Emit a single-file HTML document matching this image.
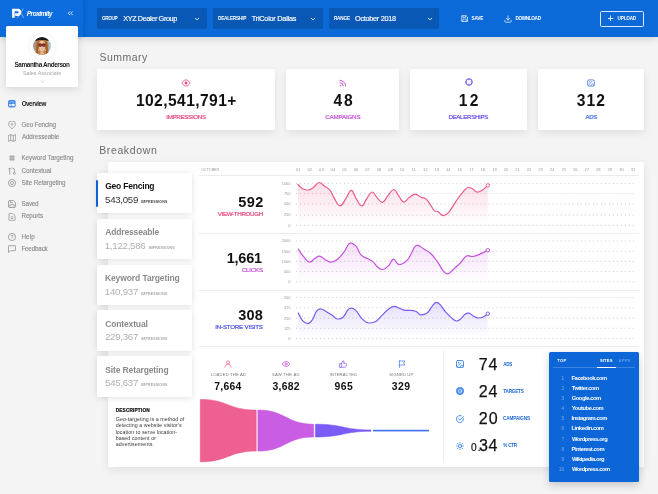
<!DOCTYPE html><html><head><meta charset="utf-8"><title>Proximity</title><style>
*{box-sizing:border-box;margin:0;padding:0}
html,body{width:658px;height:494px;overflow:hidden;background:#f4f4f4;font-family:"Liberation Sans",sans-serif;color:#111}
.abs{position:absolute}
.t{position:absolute;white-space:nowrap;line-height:1}
.b{font-weight:bold}
.i{font-style:italic}
.hdr{left:0;top:0;width:658px;height:36.5px;background:#0c69d8;box-shadow:0 2px 8px rgba(0,0,0,.14)}
.hdrl{left:0;top:0;width:83px;height:36.5px;background:#0d6ddf;box-shadow:1px 0 4px rgba(0,0,0,.13)}
.dd{top:8.3px;height:20.4px;background:#0a58b6;border-radius:1.5px}
.card{background:#fff;border-radius:1.5px;box-shadow:0 3px 9px rgba(0,0,0,.085)}
.tab{left:96.6px;width:95.6px;height:40.4px;background:#fff;border-radius:1.5px;box-shadow:0 1px 6px rgba(0,0,0,.13)}
.sep{left:199px;width:440px;height:1px;background:#ececec}
</style></head><body>
<div class="abs" style="left:0;top:0;width:658px;height:494px;will-change:transform">
<div class="abs hdr"></div><div class="abs hdrl"></div>
<svg class="abs" style="left:11px;top:7px" width="14" height="13" viewBox="11 7 14 13"><path d="M13.400 17.800V10h4.200a2.300 2.300 0 0 1 0 4.600h-2.400" stroke="#fff" stroke-width="2.600" fill="none" stroke-linejoin="miter"/><path d="M18.600 8.600l5 9.200M23.400 8.600l-6 9.200" stroke="#fff" stroke-width="0.6" fill="none" opacity=".8"/></svg>
<div class="t b i" style="left:26.78px;top:11.00px;font-size:6.60px;letter-spacing:-0.542px;color:#fff;">Proximity</div>
<svg class="abs" style="left:67px;top:10px" width="7" height="7" viewBox="0 0 7 7"><path d="M3.100 1.500L1.300 3.300l1.800 1.800M5.700 1.500L3.900 3.300l1.800 1.800" stroke="#dbe8fb" stroke-width="1" fill="none"/></svg>
<div class="abs dd" style="left:97.2px;width:110.3px"></div>
<div class="t b" style="left:102.01px;top:17.00px;font-size:4.70px;letter-spacing:-0.370px;color:#fff;">GROUP</div>
<div class="t" style="left:123.24px;top:15.00px;font-size:7.30px;letter-spacing:-0.398px;color:#fff;-webkit-text-stroke:.15px #fff">XYZ Dealer Group</div>
<svg class="abs" style="left:194.4px;top:16.500px" width="6" height="4" viewBox="0 0 6 4"><path d="M.9 .9l2.100 2L5.100 .9" stroke="#fff" stroke-width="0.8" fill="none"/></svg>
<div class="abs dd" style="left:213.1px;width:110.4px"></div>
<div class="t b" style="left:217.99px;top:17.00px;font-size:4.70px;letter-spacing:-0.202px;color:#fff;">DEALERSHIP</div>
<div class="t" style="left:251.84px;top:15.00px;font-size:7.30px;letter-spacing:-0.248px;color:#fff;-webkit-text-stroke:.15px #fff">TriColor Dallas</div>
<svg class="abs" style="left:310.3px;top:16.500px" width="6" height="4" viewBox="0 0 6 4"><path d="M.9 .9l2.100 2L5.100 .9" stroke="#fff" stroke-width="0.8" fill="none"/></svg>
<div class="abs dd" style="left:329.4px;width:110px"></div>
<div class="t b" style="left:333.89px;top:17.00px;font-size:4.70px;letter-spacing:-0.169px;color:#fff;">RANGE</div>
<div class="t" style="left:355.05px;top:15.00px;font-size:7.30px;letter-spacing:-0.288px;color:#fff;-webkit-text-stroke:.15px #fff">October 2018</div>
<svg class="abs" style="left:426.5px;top:16.500px" width="6" height="4" viewBox="0 0 6 4"><path d="M.9 .9l2.100 2L5.100 .9" stroke="#fff" stroke-width="0.8" fill="none"/></svg>
<svg class="abs" style="left:460.700px;top:14.800px" width="7.200" height="7.200" viewBox="0 0 7 7"><path d="M.7 .7h4.300l1.300 1.300v4.300H.7z" stroke="#fff" stroke-width="0.7" fill="none" stroke-linejoin="round"/><path d="M2 .7v1.700h2.400V.7M1.900 6.300V4h3.200v2.300" stroke="#fff" stroke-width="0.6" fill="none"/></svg>
<div class="t b" style="left:471.46px;top:17.00px;font-size:4.70px;letter-spacing:-0.144px;color:#fff;">SAVE</div>
<svg class="abs" style="left:504.300px;top:14.600px" width="8" height="8" viewBox="0 0 8 8"><path d="M4 .8v4.200M2.200 3.300L4 5.100l1.800-1.800M.9 5.400v1.100c0 .4.300.7.700.7h4.800c.4 0 .7-.3.700-.7V5.400" stroke="#fff" stroke-width="0.7" fill="none" stroke-linecap="round" stroke-linejoin="round"/></svg>
<div class="t b" style="left:515.39px;top:17.00px;font-size:4.70px;letter-spacing:-0.355px;color:#fff;">DOWNLOAD</div>
<div class="abs" style="left:600.400px;top:10.500px;width:44px;height:16px;border:0.8px solid rgba(255,255,255,.85);border-radius:1.500px"></div>
<div class="t" style="left:607.59px;top:13.00px;font-size:10.50px;letter-spacing:0.000px;color:#fff;">+</div>
<div class="t b" style="left:617.62px;top:17.00px;font-size:4.70px;letter-spacing:-0.233px;color:#fff;">UPLOAD</div>
<div class="abs card" style="left:5.700px;top:25.800px;width:72.300px;height:60.800px;box-shadow:0 2px 8px rgba(0,0,0,.13)"></div>
<div class="abs" style="left:29.500px;top:33.700px;width:25px;height:25px;border-radius:50%;background:#fff;box-shadow:0 0 5px rgba(0,0,0,.07)"></div>
<svg class="abs" style="left:33px;top:37.200px" width="18" height="18" viewBox="33 37.200 18 18"><defs><clipPath id="av"><circle cx="42" cy="46.200" r="9"/></clipPath></defs><g clip-path="url(#av)"><rect x="33" y="37" width="9" height="19" fill="#a59a92"/><rect x="42" y="37" width="9" height="19" fill="#a9c3cf"/><path d="M35.500 56V45c0-3.500 2.500-5.800 6.500-5.800s6.500 2.300 6.500 5.800v11z" fill="#c4824a"/><path d="M36 56l.6-11c.2-2 1-3.300 2.200-4l-.8 15zM48 56l-.6-11c-.2-2-1-3.300-2.200-4l.8 15z" fill="#9c5c2e"/><path d="M39.300 43.200c.5-1.500 1.500-2.200 2.700-2.200s2.200.7 2.700 2.200l.2 4.300c0 2.200-1.300 4.200-2.900 4.200s-2.900-2-2.900-4.200z" fill="#edc4a5"/><path d="M40.500 51.500h3l.8 4.500h-4.600z" fill="#e3b08c"/><path d="M35.300 41.300c.6-2.600 3.300-4 6.700-4s6.100 1.400 6.700 4c-2-.7-4.300-1-6.700-1s-4.700.3-6.700 1z" fill="#17171a"/><circle cx="40.300" cy="45.300" r="1.500" fill="#c9302c" stroke="#2a1414" stroke-width=".6"/><circle cx="43.700" cy="45.300" r="1.500" fill="#c9302c" stroke="#2a1414" stroke-width=".6"/><path d="M41.800 45h.4" stroke="#2a1414" stroke-width=".4"/><path d="M41.300 48.800h1.400" stroke="#c4615a" stroke-width=".5"/><circle cx="38.700" cy="50.300" r=".6" fill="#f4efe8"/><circle cx="45.400" cy="50.300" r=".6" fill="#f4efe8"/></g></svg>
<div class="t b" style="left:14.42px;top:62.00px;font-size:6.40px;letter-spacing:-0.395px;color:#1a1a1a;">Samantha Anderson</div>
<div class="t" style="left:22.95px;top:71.00px;font-size:5.40px;letter-spacing:0.019px;color:#a6a6a6;">Sales Associate</div>
<svg class="abs" style="left:39.500px;top:80px" width="5" height="3" viewBox="0 0 5 3"><path d="M.6 .6l1.900 1.700L4.400 .6" stroke="#bbb" stroke-width="0.6" fill="none"/></svg>
<svg class="abs" style="left:8.300px;top:100px" width="7.700" height="7.700" viewBox="0 0 8 8"><rect x=".1" y=".1" width="7.800" height="7.800" rx="1.800" fill="#3a82e6"/><rect x="1.200" y="1.200" width="5.600" height="1.500" rx=".4" fill="#8db8f2"/><rect x="1.200" y="3.900" width="1.700" height="2.700" rx=".4" fill="#e8f1fd"/><rect x="3.800" y="3.900" width="3" height="2.700" rx=".5" fill="#fff"/></svg>
<div class="t b" style="left:21.64px;top:101.00px;font-size:6.30px;letter-spacing:-0.453px;color:#1a1a1a;">Overview</div>
<svg class="abs" style="left:8.20px;top:120.80px" width="8" height="8" viewBox="0 0 8 8" fill="none" stroke="#8c8c8c" stroke-width="0.75" stroke-linejoin="round"><path d="M4 7.800C2 5.900.5 4.700.5 3.400a3.500 3.500 0 0 1 7 0C7.500 4.700 6 5.900 4 7.800z"/><circle cx="4" cy="3.400" r=".8"/></svg>
<div class="t" style="left:21.58px;top:122.00px;font-size:6.30px;letter-spacing:-0.165px;color:#8a8a8a;-webkit-text-stroke:.12px #8a8a8a">Geo Fencing</div>
<svg class="abs" style="left:8.20px;top:133.50px" width="8" height="8" viewBox="0 0 8 8" fill="none" stroke="#8c8c8c" stroke-width="0.75" stroke-linejoin="round"><path d="M.3 1.500l2.400-.8 2.600.8 2.400-.8v5.800l-2.400.8-2.600-.8-2.400.8zM2.700 .7v5.800M5.300 1.500v5.800"/></svg>
<div class="t" style="left:21.89px;top:134.00px;font-size:6.30px;letter-spacing:-0.103px;color:#8a8a8a;-webkit-text-stroke:.12px #8a8a8a">Addresseable</div>
<svg class="abs" style="left:8.00px;top:154.30px" width="8" height="8" viewBox="0 0 8 8" fill="none" stroke="#8c8c8c" stroke-width="0.75" stroke-linejoin="round"><path d="M1.100 2.900h5.800M1.100 5.100h5.800M3 1v6M5.100 1v6"/></svg>
<div class="t" style="left:21.38px;top:155.00px;font-size:6.30px;letter-spacing:0.004px;color:#8a8a8a;-webkit-text-stroke:.12px #8a8a8a">Keyword Targeting</div>
<svg class="abs" style="left:8.20px;top:166.50px" width="8" height="8" viewBox="0 0 8 8" fill="none" stroke="#8c8c8c" stroke-width="0.75" stroke-linejoin="round"><path d="M1.700 1v6.500M.5 2.300L1.700 .9l1.200 1.400M3.800 1.100c1.800 0 2.600.7 2.600 2.100v1.900"/><circle cx="6.400" cy="6.300" r="1"/></svg>
<div class="t" style="left:21.58px;top:168.00px;font-size:6.30px;letter-spacing:-0.042px;color:#8a8a8a;-webkit-text-stroke:.12px #8a8a8a">Contextual</div>
<svg class="abs" style="left:8.40px;top:178.80px" width="8" height="8" viewBox="0 0 8 8" fill="none" stroke="#8c8c8c" stroke-width="0.75" stroke-linejoin="round"><circle cx="4" cy="4" r="3.600"/><circle cx="4" cy="4" r="1.600"/></svg>
<div class="t" style="left:21.61px;top:180.00px;font-size:6.30px;letter-spacing:-0.086px;color:#8a8a8a;-webkit-text-stroke:.12px #8a8a8a">Site Retargeting</div>
<svg class="abs" style="left:8.20px;top:199.50px" width="8" height="8" viewBox="0 0 8 8" fill="none" stroke="#8c8c8c" stroke-width="0.75" stroke-linejoin="round"><path d="M.5 1.500c0-.6.400-1 1-1h3.900L7.500 2.600v3.900c0 .6-.4 1-1 1h-5c-.6 0-1-.4-1-1zM2.200 .5v2h2.600M1.900 7.500V4.700h4.200v2.800"/></svg>
<div class="t" style="left:21.61px;top:201.00px;font-size:6.30px;letter-spacing:-0.218px;color:#8a8a8a;-webkit-text-stroke:.12px #8a8a8a">Saved</div>
<svg class="abs" style="left:8.15px;top:212.50px" width="8" height="8" viewBox="0 0 8 8" fill="none" stroke="#8c8c8c" stroke-width="0.75" stroke-linejoin="round"><path d="M1 1c0-.4.300-.7.700-.7h2.900L7 2.700V7c0 .4-.3.700-.7.700H1.700C1.300 7.700 1 7.400 1 7zM2.800 3.900h2.400M2.800 5.500h2.400"/></svg>
<div class="t" style="left:21.38px;top:213.00px;font-size:6.30px;letter-spacing:-0.036px;color:#8a8a8a;-webkit-text-stroke:.12px #8a8a8a">Reports</div>
<svg class="abs" style="left:8.10px;top:232.90px" width="8" height="8" viewBox="0 0 8 8" fill="none" stroke="#8c8c8c" stroke-width="0.75" stroke-linejoin="round"><circle cx="4" cy="4" r="3.600"/><path d="M3 3.100c0-.7.500-1 1-1s1 .4 1 .9c0 .8-1 .8-1 1.700M4 5.700v.4"/></svg>
<div class="t" style="left:21.38px;top:234.00px;font-size:6.30px;letter-spacing:0.108px;color:#8a8a8a;-webkit-text-stroke:.12px #8a8a8a">Help</div>
<svg class="abs" style="left:8.20px;top:245.20px" width="8" height="8" viewBox="0 0 8 8" fill="none" stroke="#8c8c8c" stroke-width="0.75" stroke-linejoin="round"><path d="M.5 1.200c0-.3.200-.5.500-.5h6c.3 0 .5.200.5.500v4c0 .3-.2.500-.5.500H2.700L.5 7.500z"/></svg>
<div class="t" style="left:21.38px;top:246.00px;font-size:6.30px;letter-spacing:-0.180px;color:#8a8a8a;-webkit-text-stroke:.12px #8a8a8a">Feedback</div>
<div class="t" style="left:99.52px;top:52.00px;font-size:10.50px;letter-spacing:0.479px;color:#6a6a6a;">Summary</div>
<div class="abs card" style="left:97px;top:69px;width:178.3px;height:61px"></div>
<svg class="abs" style="left:181.00px;top:77.85px;color:#e8467f" width="10" height="10" viewBox="-5 -5 10 10" fill="none" stroke="#e8467f" stroke-width="0.7"><path d="M-4.100 0C-2.800-2.200-1.500-3.100 0-3.100S2.800-2.200 4.100 0C2.800 2.200 1.500 3.100 0 3.100S-2.800 2.200-4.100 0z" stroke-width=".8"/><circle cx="0" cy="0" r="1.200" fill="currentColor" stroke-width=".5"/></svg>
<div class="t b" style="left:135.92px;top:93.00px;font-size:15.60px;letter-spacing:0.423px;color:#111;">102,541,791+</div>
<div class="t" style="left:166.23px;top:114.00px;font-size:6.20px;letter-spacing:-0.311px;color:#e8467f;-webkit-text-stroke:.2px #e8467f">IMPRESSIONS</div>
<div class="abs card" style="left:286.2px;top:69px;width:112.7px;height:61px"></div>
<svg class="abs" style="left:337.90px;top:77.80px;color:#c44fd8" width="10" height="10" viewBox="-5 -5 10 10" fill="none" stroke="#c44fd8" stroke-width="0.7"><path d="M-3-2.700A5.700 5.700 0 0 1 2.700 3M-3-.3A3.300 3.300 0 0 1 .3 3" stroke-width=".95" stroke-linecap="round"/><circle cx="-2.450" cy="2.550" r=".7" fill="currentColor" stroke="none"/></svg>
<div class="t b" style="left:333.56px;top:93.00px;font-size:15.60px;letter-spacing:1.864px;color:#111;">48</div>
<div class="t" style="left:325.29px;top:114.00px;font-size:6.20px;letter-spacing:-0.181px;color:#c44fd8;-webkit-text-stroke:.2px #c44fd8">CAMPAIGNS</div>
<div class="abs card" style="left:410px;top:69px;width:117px;height:61px"></div>
<svg class="abs" style="left:463.75px;top:77.20px;color:#6a4ff0" width="10" height="10" viewBox="-5 -5 10 10" fill="none" stroke="#6a4ff0" stroke-width="0.7"><circle cx="0" cy="0" r="3.250" stroke-width="1"/><path d="M0-3.300v1.500M0 3.300v-1.500M-3.300 0h1.500M3.300 0h-1.500" stroke-width=".9"/></svg>
<div class="t b" style="left:458.82px;top:93.00px;font-size:15.60px;letter-spacing:2.255px;color:#111;">12</div>
<div class="t" style="left:448.39px;top:114.00px;font-size:6.20px;letter-spacing:-0.332px;color:#6a4ff0;-webkit-text-stroke:.2px #6a4ff0">DEALERSHIPS</div>
<div class="abs card" style="left:538.2px;top:69px;width:105.8px;height:61px"></div>
<svg class="abs" style="left:586.20px;top:77.50px;color:#3f6fe8" width="10" height="10" viewBox="-5 -5 10 10" fill="none" stroke="#3f6fe8" stroke-width="0.7"><rect x="-3.400" y="-3.100" width="6.800" height="6.200" rx="1.300" stroke-width=".8"/><path d="M-2.800 2.600L1.200-1.900M-.2 2.700L1.500.6l1.700 2" stroke-width=".7"/><path d="M-2.200-1.200h1.300" stroke-width=".8"/></svg>
<div class="t b" style="left:576.64px;top:93.00px;font-size:15.60px;letter-spacing:1.177px;color:#111;">312</div>
<div class="t" style="left:585.49px;top:114.00px;font-size:6.20px;letter-spacing:-0.476px;color:#3f6fe8;-webkit-text-stroke:.2px #3f6fe8">ADS</div>
<div class="t" style="left:99.14px;top:145.00px;font-size:10.50px;letter-spacing:0.639px;color:#6a6a6a;">Breakdown</div>
<div class="abs card" style="left:107.800px;top:162.400px;width:536.200px;height:304.700px;box-shadow:0 3px 10px rgba(0,0,0,.08)"></div>
<div class="t" style="left:201.22px;top:169.00px;font-size:3.70px;letter-spacing:-0.030px;color:#999;">OCTOBER</div>
<div class="t" style="left:296.04px;top:168.00px;font-size:4.10px;letter-spacing:0.000px;color:#999;">01</div>
<div class="t" style="left:307.58px;top:168.00px;font-size:4.10px;letter-spacing:0.000px;color:#999;">02</div>
<div class="t" style="left:319.11px;top:168.00px;font-size:4.10px;letter-spacing:0.000px;color:#999;">03</div>
<div class="t" style="left:330.62px;top:168.00px;font-size:4.10px;letter-spacing:0.000px;color:#999;">04</div>
<div class="t" style="left:342.19px;top:168.00px;font-size:4.10px;letter-spacing:0.000px;color:#999;">05</div>
<div class="t" style="left:353.73px;top:168.00px;font-size:4.10px;letter-spacing:0.000px;color:#999;">06</div>
<div class="t" style="left:365.28px;top:168.00px;font-size:4.10px;letter-spacing:0.000px;color:#999;">07</div>
<div class="t" style="left:376.81px;top:168.00px;font-size:4.10px;letter-spacing:0.000px;color:#999;">08</div>
<div class="t" style="left:388.36px;top:168.00px;font-size:4.10px;letter-spacing:0.000px;color:#999;">09</div>
<div class="t" style="left:399.80px;top:168.00px;font-size:4.10px;letter-spacing:0.000px;color:#999;">10</div>
<div class="t" style="left:411.52px;top:168.00px;font-size:4.10px;letter-spacing:0.000px;color:#999;">11</div>
<div class="t" style="left:422.91px;top:168.00px;font-size:4.10px;letter-spacing:0.000px;color:#999;">12</div>
<div class="t" style="left:434.43px;top:168.00px;font-size:4.10px;letter-spacing:0.000px;color:#999;">13</div>
<div class="t" style="left:445.94px;top:168.00px;font-size:4.10px;letter-spacing:0.000px;color:#999;">14</div>
<div class="t" style="left:457.51px;top:168.00px;font-size:4.10px;letter-spacing:0.000px;color:#999;">16</div>
<div class="t" style="left:469.07px;top:168.00px;font-size:4.10px;letter-spacing:0.000px;color:#999;">17</div>
<div class="t" style="left:480.59px;top:168.00px;font-size:4.10px;letter-spacing:0.000px;color:#999;">18</div>
<div class="t" style="left:492.14px;top:168.00px;font-size:4.10px;letter-spacing:0.000px;color:#999;">19</div>
<div class="t" style="left:503.72px;top:168.00px;font-size:4.10px;letter-spacing:0.000px;color:#999;">20</div>
<div class="t" style="left:515.28px;top:168.00px;font-size:4.10px;letter-spacing:0.000px;color:#999;">21</div>
<div class="t" style="left:526.82px;top:168.00px;font-size:4.10px;letter-spacing:0.000px;color:#999;">22</div>
<div class="t" style="left:538.35px;top:168.00px;font-size:4.10px;letter-spacing:0.000px;color:#999;">23</div>
<div class="t" style="left:549.86px;top:168.00px;font-size:4.10px;letter-spacing:0.000px;color:#999;">24</div>
<div class="t" style="left:561.42px;top:168.00px;font-size:4.10px;letter-spacing:0.000px;color:#999;">25</div>
<div class="t" style="left:572.97px;top:168.00px;font-size:4.10px;letter-spacing:0.000px;color:#999;">26</div>
<div class="t" style="left:584.52px;top:168.00px;font-size:4.10px;letter-spacing:0.000px;color:#999;">27</div>
<div class="t" style="left:596.05px;top:168.00px;font-size:4.10px;letter-spacing:0.000px;color:#999;">28</div>
<div class="t" style="left:607.59px;top:168.00px;font-size:4.10px;letter-spacing:0.000px;color:#999;">29</div>
<div class="t" style="left:619.14px;top:168.00px;font-size:4.10px;letter-spacing:0.000px;color:#999;">30</div>
<div class="t" style="left:630.70px;top:168.00px;font-size:4.10px;letter-spacing:0.000px;color:#999;">31</div>
<div class="abs sep" style="top:175px"></div>
<div class="abs sep" style="top:233px"></div>
<div class="abs sep" style="top:290px"></div>
<div class="abs sep" style="top:346px"></div>
<div class="t" style="left:281.66px;top:182.00px;font-size:4.00px;letter-spacing:0.000px;color:#999;">1000</div>
<div class="t" style="left:283.88px;top:192.00px;font-size:4.00px;letter-spacing:0.000px;color:#999;">750</div>
<div class="t" style="left:283.88px;top:202.00px;font-size:4.00px;letter-spacing:0.000px;color:#999;">500</div>
<div class="t" style="left:283.88px;top:213.00px;font-size:4.00px;letter-spacing:0.000px;color:#999;">250</div>
<div class="t" style="left:288.33px;top:224.00px;font-size:4.00px;letter-spacing:0.000px;color:#999;">0</div>
<div class="t" style="left:281.66px;top:239.00px;font-size:4.00px;letter-spacing:0.000px;color:#999;">2000</div>
<div class="t" style="left:281.66px;top:250.00px;font-size:4.00px;letter-spacing:0.000px;color:#999;">1500</div>
<div class="t" style="left:281.66px;top:260.00px;font-size:4.00px;letter-spacing:0.000px;color:#999;">1000</div>
<div class="t" style="left:283.88px;top:270.00px;font-size:4.00px;letter-spacing:0.000px;color:#999;">500</div>
<div class="t" style="left:288.33px;top:280.00px;font-size:4.00px;letter-spacing:0.000px;color:#999;">0</div>
<div class="t" style="left:283.88px;top:296.00px;font-size:4.00px;letter-spacing:0.000px;color:#999;">500</div>
<div class="t" style="left:283.89px;top:306.00px;font-size:4.00px;letter-spacing:0.000px;color:#999;">375</div>
<div class="t" style="left:283.88px;top:317.00px;font-size:4.00px;letter-spacing:0.000px;color:#999;">250</div>
<div class="t" style="left:283.89px;top:327.00px;font-size:4.00px;letter-spacing:0.000px;color:#999;">125</div>
<div class="t" style="left:288.33px;top:337.00px;font-size:4.00px;letter-spacing:0.000px;color:#999;">0</div>
<div class="t b" style="left:238.25px;top:195.00px;font-size:14.50px;letter-spacing:0.417px;color:#111;">592</div>
<div class="t" style="left:217.77px;top:211.00px;font-size:6.20px;letter-spacing:-0.337px;color:#e8467f;-webkit-text-stroke:.2px #e8467f">VIEW-THROUGH</div>
<div class="t b" style="left:226.79px;top:251.00px;font-size:14.50px;letter-spacing:-0.267px;color:#111;">1,661</div>
<div class="t" style="left:241.89px;top:267.00px;font-size:6.20px;letter-spacing:-0.239px;color:#c44fd8;-webkit-text-stroke:.2px #c44fd8">CLICKS</div>
<div class="t b" style="left:238.27px;top:308.00px;font-size:14.50px;letter-spacing:0.143px;color:#111;">308</div>
<div class="t" style="left:215.33px;top:324.00px;font-size:6.20px;letter-spacing:-0.223px;color:#4a50ea;-webkit-text-stroke:.2px #4a50ea">IN-STORE VISITS</div>
<svg class="abs" style="left:0;top:0" width="658" height="494" viewBox="0 0 658 494"><line x1="296" x2="634.5" y1="183.5" y2="183.5" stroke="#d4d4d4" stroke-width="1.1" stroke-dasharray="1.1 2.91"/><line x1="296" x2="634.5" y1="193.5" y2="193.5" stroke="#d4d4d4" stroke-width="1.1" stroke-dasharray="1.1 2.91"/><line x1="296" x2="634.5" y1="203.9" y2="203.9" stroke="#d4d4d4" stroke-width="1.1" stroke-dasharray="1.1 2.91"/><line x1="296" x2="634.5" y1="215.1" y2="215.1" stroke="#d4d4d4" stroke-width="1.1" stroke-dasharray="1.1 2.91"/><line x1="296" x2="634.5" y1="225.4" y2="225.4" stroke="#d4d4d4" stroke-width="1.1" stroke-dasharray="1.1 2.91"/><line x1="296" x2="634.5" y1="241.0" y2="241.0" stroke="#d4d4d4" stroke-width="1.1" stroke-dasharray="1.1 2.91"/><line x1="296" x2="634.5" y1="251.2" y2="251.2" stroke="#d4d4d4" stroke-width="1.1" stroke-dasharray="1.1 2.91"/><line x1="296" x2="634.5" y1="261.4" y2="261.4" stroke="#d4d4d4" stroke-width="1.1" stroke-dasharray="1.1 2.91"/><line x1="296" x2="634.5" y1="271.5" y2="271.5" stroke="#d4d4d4" stroke-width="1.1" stroke-dasharray="1.1 2.91"/><line x1="296" x2="634.5" y1="281.7" y2="281.7" stroke="#d4d4d4" stroke-width="1.1" stroke-dasharray="1.1 2.91"/><line x1="296" x2="634.5" y1="297.5" y2="297.5" stroke="#d4d4d4" stroke-width="1.1" stroke-dasharray="1.1 2.91"/><line x1="296" x2="634.5" y1="307.7" y2="307.7" stroke="#d4d4d4" stroke-width="1.1" stroke-dasharray="1.1 2.91"/><line x1="296" x2="634.5" y1="318.1" y2="318.1" stroke="#d4d4d4" stroke-width="1.1" stroke-dasharray="1.1 2.91"/><line x1="296" x2="634.5" y1="328.3" y2="328.3" stroke="#d4d4d4" stroke-width="1.1" stroke-dasharray="1.1 2.91"/><line x1="296" x2="634.5" y1="338.5" y2="338.5" stroke="#d4d4d4" stroke-width="1.1" stroke-dasharray="1.1 2.91"/><defs><linearGradient id="gr1" x1="0" y1="182.5" x2="0" y2="225.0" gradientUnits="userSpaceOnUse"><stop offset="0" stop-color="#ea5a8a" stop-opacity="0.2"/><stop offset="1" stop-color="#ea5a8a" stop-opacity="0"/></linearGradient></defs><path d="M298.0,184.5C300.0,186.3 300.5,187.7 302.5,188.7C305.1,190.1 305.8,190.0 308.4,190.0C310.6,190.0 311.2,189.0 313.4,187.5C316.0,185.7 316.7,182.5 319.3,182.5C321.5,182.5 322.1,184.3 324.3,185.9C326.9,187.8 327.5,187.2 330.1,190.4C331.9,192.7 332.5,195.6 334.3,198.4C336.9,202.4 337.6,205.9 340.2,205.9C342.8,205.9 343.4,201.9 346.0,198.4C348.4,195.1 349.0,190.4 351.4,190.4C353.4,190.4 354.0,195.4 356.0,198.4C358.6,202.2 359.3,205.9 361.9,205.9C364.1,205.9 364.7,201.3 366.9,198.4C369.3,195.2 369.9,192.0 372.3,192.0C374.4,192.0 374.9,195.5 377.0,197.6C379.3,200.0 380.0,202.3 382.3,202.3C384.7,202.3 385.4,198.6 387.8,195.9C390.4,193.0 391.1,189.5 393.7,189.5C396.1,189.5 396.8,193.7 399.2,196.7C401.2,199.2 401.7,202.1 403.7,202.1C406.1,202.1 406.8,199.3 409.2,197.6C411.8,195.8 412.5,194.2 415.1,194.2C418.0,194.2 418.9,196.3 421.8,197.6C423.6,198.4 424.1,197.4 425.9,198.9C427.7,200.4 428.3,201.7 430.1,204.3C431.9,206.9 432.5,208.8 434.3,210.6C435.8,212.0 436.1,210.7 437.6,211.5C440.2,212.9 440.9,215.6 443.5,215.6C445.7,215.6 446.3,215.0 448.5,212.6C451.4,209.3 452.3,206.8 455.2,202.6C458.1,198.4 459.0,196.7 461.9,193.4C464.8,190.1 465.7,187.5 468.6,187.5C470.4,187.5 471.0,187.9 472.8,188.9C474.8,190.0 475.3,192.2 477.3,192.2C479.7,192.2 480.4,191.3 482.8,189.7C485.0,188.3 485.6,187.3 487.8,185.4L487.8,225.0 L298.0,225.0 Z" fill="url(#gr1)"/><path d="M298.0,184.5C300.0,186.3 300.5,187.7 302.5,188.7C305.1,190.1 305.8,190.0 308.4,190.0C310.6,190.0 311.2,189.0 313.4,187.5C316.0,185.7 316.7,182.5 319.3,182.5C321.5,182.5 322.1,184.3 324.3,185.9C326.9,187.8 327.5,187.2 330.1,190.4C331.9,192.7 332.5,195.6 334.3,198.4C336.9,202.4 337.6,205.9 340.2,205.9C342.8,205.9 343.4,201.9 346.0,198.4C348.4,195.1 349.0,190.4 351.4,190.4C353.4,190.4 354.0,195.4 356.0,198.4C358.6,202.2 359.3,205.9 361.9,205.9C364.1,205.9 364.7,201.3 366.9,198.4C369.3,195.2 369.9,192.0 372.3,192.0C374.4,192.0 374.9,195.5 377.0,197.6C379.3,200.0 380.0,202.3 382.3,202.3C384.7,202.3 385.4,198.6 387.8,195.9C390.4,193.0 391.1,189.5 393.7,189.5C396.1,189.5 396.8,193.7 399.2,196.7C401.2,199.2 401.7,202.1 403.7,202.1C406.1,202.1 406.8,199.3 409.2,197.6C411.8,195.8 412.5,194.2 415.1,194.2C418.0,194.2 418.9,196.3 421.8,197.6C423.6,198.4 424.1,197.4 425.9,198.9C427.7,200.4 428.3,201.7 430.1,204.3C431.9,206.9 432.5,208.8 434.3,210.6C435.8,212.0 436.1,210.7 437.6,211.5C440.2,212.9 440.9,215.6 443.5,215.6C445.7,215.6 446.3,215.0 448.5,212.6C451.4,209.3 452.3,206.8 455.2,202.6C458.1,198.4 459.0,196.7 461.9,193.4C464.8,190.1 465.7,187.5 468.6,187.5C470.4,187.5 471.0,187.9 472.8,188.9C474.8,190.0 475.3,192.2 477.3,192.2C479.7,192.2 480.4,191.3 482.8,189.7C485.0,188.3 485.6,187.3 487.8,185.4" fill="none" stroke="#ea5a8a" stroke-width="1.2" stroke-linecap="round" stroke-linejoin="round"/><circle cx="487.8" cy="185.4" r="1.7" fill="#fff" stroke="#ea5a8a" stroke-width="1"/><defs><linearGradient id="gr2" x1="0" y1="242.9" x2="0" y2="282.0" gradientUnits="userSpaceOnUse"><stop offset="0" stop-color="#c552dc" stop-opacity="0.2"/><stop offset="1" stop-color="#c552dc" stop-opacity="0"/></linearGradient></defs><path d="M298.3,249.2C300.6,252.5 301.3,254.0 303.6,256.7C306.2,259.7 306.9,262.2 309.5,262.2C311.7,262.2 312.3,260.1 314.5,258.7C316.7,257.4 317.2,256.1 319.4,256.1C322.0,256.1 322.7,258.4 325.3,259.7C327.9,261.1 328.7,262.2 331.3,262.2C334.3,262.2 335.2,261.2 338.2,258.7C340.8,256.6 341.5,255.1 344.1,251.8C347.0,248.2 347.7,242.9 350.6,242.9C353.0,242.9 353.6,243.5 356.0,246.2C358.2,248.7 358.7,252.3 360.9,254.7C363.5,257.6 364.2,256.8 366.8,258.3C369.4,259.8 370.2,259.4 372.8,261.6C375.0,263.4 375.5,265.5 377.7,267.2C379.9,268.9 380.4,269.5 382.6,269.5C385.2,269.5 386.0,268.1 388.6,265.6C390.8,263.5 391.3,259.1 393.5,259.1C395.4,259.1 395.9,262.9 397.8,264.0C399.6,265.0 400.0,264.8 401.8,264.0C404.4,262.9 405.1,262.6 407.7,259.7C409.5,257.7 409.9,256.1 411.7,252.8C413.0,250.4 413.3,248.4 414.6,246.8C415.9,245.1 416.3,245.4 417.6,245.4C420.2,245.4 420.9,247.2 423.5,248.8C426.6,250.7 427.4,250.5 430.5,253.3C433.5,256.1 434.4,257.4 437.4,261.6C440.0,265.2 440.7,268.0 443.3,271.1C445.2,273.4 445.7,273.9 447.6,273.9C449.6,273.9 450.2,272.2 452.2,270.5C455.7,267.5 456.6,266.5 460.1,263.2C463.6,259.9 464.5,255.7 468.0,255.7C469.8,255.7 470.2,256.5 472.0,256.5C475.5,256.5 476.4,255.5 479.9,254.1C483.4,252.7 484.3,251.9 487.8,250.2L487.8,282.0 L298.3,282.0 Z" fill="url(#gr2)"/><path d="M298.3,249.2C300.6,252.5 301.3,254.0 303.6,256.7C306.2,259.7 306.9,262.2 309.5,262.2C311.7,262.2 312.3,260.1 314.5,258.7C316.7,257.4 317.2,256.1 319.4,256.1C322.0,256.1 322.7,258.4 325.3,259.7C327.9,261.1 328.7,262.2 331.3,262.2C334.3,262.2 335.2,261.2 338.2,258.7C340.8,256.6 341.5,255.1 344.1,251.8C347.0,248.2 347.7,242.9 350.6,242.9C353.0,242.9 353.6,243.5 356.0,246.2C358.2,248.7 358.7,252.3 360.9,254.7C363.5,257.6 364.2,256.8 366.8,258.3C369.4,259.8 370.2,259.4 372.8,261.6C375.0,263.4 375.5,265.5 377.7,267.2C379.9,268.9 380.4,269.5 382.6,269.5C385.2,269.5 386.0,268.1 388.6,265.6C390.8,263.5 391.3,259.1 393.5,259.1C395.4,259.1 395.9,262.9 397.8,264.0C399.6,265.0 400.0,264.8 401.8,264.0C404.4,262.9 405.1,262.6 407.7,259.7C409.5,257.7 409.9,256.1 411.7,252.8C413.0,250.4 413.3,248.4 414.6,246.8C415.9,245.1 416.3,245.4 417.6,245.4C420.2,245.4 420.9,247.2 423.5,248.8C426.6,250.7 427.4,250.5 430.5,253.3C433.5,256.1 434.4,257.4 437.4,261.6C440.0,265.2 440.7,268.0 443.3,271.1C445.2,273.4 445.7,273.9 447.6,273.9C449.6,273.9 450.2,272.2 452.2,270.5C455.7,267.5 456.6,266.5 460.1,263.2C463.6,259.9 464.5,255.7 468.0,255.7C469.8,255.7 470.2,256.5 472.0,256.5C475.5,256.5 476.4,255.5 479.9,254.1C483.4,252.7 484.3,251.9 487.8,250.2" fill="none" stroke="#c552dc" stroke-width="1.2" stroke-linecap="round" stroke-linejoin="round"/><circle cx="487.8" cy="250.2" r="1.7" fill="#fff" stroke="#c552dc" stroke-width="1"/><defs><linearGradient id="gr3" x1="0" y1="302.4" x2="0" y2="338.4" gradientUnits="userSpaceOnUse"><stop offset="0" stop-color="#7a5af0" stop-opacity="0.2"/><stop offset="1" stop-color="#7a5af0" stop-opacity="0"/></linearGradient></defs><path d="M298.3,313.1C300.2,316.4 300.7,318.5 302.6,320.6C304.9,323.2 305.6,323.6 307.9,323.6C309.9,323.6 310.5,322.5 312.5,319.6C314.2,317.1 314.7,313.8 316.4,311.3C318.0,309.0 318.4,308.8 320.0,308.8C322.8,308.8 323.5,310.2 326.3,311.7C328.9,313.1 329.7,313.5 332.3,315.3C334.5,316.7 335.0,319.0 337.2,319.0C339.8,319.0 340.5,319.4 343.1,317.2C345.3,315.3 345.9,312.1 348.1,309.7C349.6,308.1 349.9,308.2 351.4,308.2C353.4,308.2 354.0,308.7 356.0,310.7C358.6,313.3 359.3,316.1 361.9,318.6C364.9,321.5 365.8,323.0 368.8,323.0C371.8,323.0 372.7,323.3 375.7,321.6C378.3,320.1 379.1,318.3 381.7,315.7C384.7,312.8 385.6,311.3 388.6,309.1C391.1,307.2 391.8,306.4 394.3,306.4C396.7,306.4 397.4,307.5 399.8,308.4C402.0,309.2 402.6,309.9 404.8,310.3C407.8,310.8 408.7,310.1 411.7,310.5C413.9,310.8 414.4,310.6 416.6,311.7C418.4,312.6 418.8,314.9 420.6,314.9C423.6,314.9 424.5,315.0 427.5,312.7C429.7,311.0 430.2,308.3 432.4,305.8C434.2,303.8 434.6,302.4 436.4,302.4C438.1,302.4 438.6,303.0 440.3,304.8C442.5,307.1 443.1,309.1 445.3,311.7C447.9,314.7 448.6,315.4 451.2,317.6C453.5,319.5 454.2,321.0 456.5,321.0C458.5,321.0 459.1,320.2 461.1,318.6C462.8,317.2 463.3,315.6 465.0,314.3C466.5,313.2 466.9,313.1 468.4,313.1C470.4,313.1 470.9,314.7 472.9,315.7C475.1,316.8 475.7,318.0 477.9,318.0C480.5,318.0 481.2,317.8 483.8,316.7C485.6,315.9 486.0,315.0 487.8,313.7L487.8,338.4 L298.3,338.4 Z" fill="url(#gr3)"/><path d="M298.3,313.1C300.2,316.4 300.7,318.5 302.6,320.6C304.9,323.2 305.6,323.6 307.9,323.6C309.9,323.6 310.5,322.5 312.5,319.6C314.2,317.1 314.7,313.8 316.4,311.3C318.0,309.0 318.4,308.8 320.0,308.8C322.8,308.8 323.5,310.2 326.3,311.7C328.9,313.1 329.7,313.5 332.3,315.3C334.5,316.7 335.0,319.0 337.2,319.0C339.8,319.0 340.5,319.4 343.1,317.2C345.3,315.3 345.9,312.1 348.1,309.7C349.6,308.1 349.9,308.2 351.4,308.2C353.4,308.2 354.0,308.7 356.0,310.7C358.6,313.3 359.3,316.1 361.9,318.6C364.9,321.5 365.8,323.0 368.8,323.0C371.8,323.0 372.7,323.3 375.7,321.6C378.3,320.1 379.1,318.3 381.7,315.7C384.7,312.8 385.6,311.3 388.6,309.1C391.1,307.2 391.8,306.4 394.3,306.4C396.7,306.4 397.4,307.5 399.8,308.4C402.0,309.2 402.6,309.9 404.8,310.3C407.8,310.8 408.7,310.1 411.7,310.5C413.9,310.8 414.4,310.6 416.6,311.7C418.4,312.6 418.8,314.9 420.6,314.9C423.6,314.9 424.5,315.0 427.5,312.7C429.7,311.0 430.2,308.3 432.4,305.8C434.2,303.8 434.6,302.4 436.4,302.4C438.1,302.4 438.6,303.0 440.3,304.8C442.5,307.1 443.1,309.1 445.3,311.7C447.9,314.7 448.6,315.4 451.2,317.6C453.5,319.5 454.2,321.0 456.5,321.0C458.5,321.0 459.1,320.2 461.1,318.6C462.8,317.2 463.3,315.6 465.0,314.3C466.5,313.2 466.9,313.1 468.4,313.1C470.4,313.1 470.9,314.7 472.9,315.7C475.1,316.8 475.7,318.0 477.9,318.0C480.5,318.0 481.2,317.8 483.8,316.7C485.6,315.9 486.0,315.0 487.8,313.7" fill="none" stroke="#7a5af0" stroke-width="1.2" stroke-linecap="round" stroke-linejoin="round"/><circle cx="487.8" cy="313.7" r="1.7" fill="#fff" stroke="#7a5af0" stroke-width="1"/><path d="M200.3,399.4 C228.2,399.4 228.2,410.1 256.2,410.1 L256.2,451.1 C228.2,451.1 228.2,461.8 200.3,461.8 Z" fill="#ee6092" stroke="#ea4f85" stroke-width=".5"/><path d="M257.9,410.1 C285.8,410.1 285.8,424.2 313.6,424.2 L313.6,437.0 C285.8,437.0 285.8,451.1 257.9,451.1 Z" fill="#c95ee4" stroke="#c24fde" stroke-width=".5"/><path d="M315.4,424.2 C343.2,424.2 343.2,429.9 371.0,429.9 L371.0,431.3 C343.2,431.3 343.2,437.0 315.4,437.0 Z" fill="#7b5cf5" stroke="#7050f0" stroke-width=".5"/><rect x="373" y="429.8" width="56" height="1.6" fill="#3f6fea"/></svg>
<div class="abs tab" style="top:173.1px">
<div class="abs" style="left:-.6px;top:6.800px;width:2.300px;height:27.400px;background:#0f62d6;border-radius:1.100px"></div>
</div>
<div class="t b" style="left:105.15px;top:182.00px;font-size:8.50px;letter-spacing:-0.206px;color:#111;">Geo Fencing</div>
<div class="t" style="left:105.11px;top:195.00px;font-size:9.70px;letter-spacing:-0.303px;color:#333;">543,059</div>
<div class="t b" style="left:141.26px;top:201.00px;font-size:3.60px;letter-spacing:0.108px;color:#444;">IMPRESSIONS</div>
<div class="abs tab" style="top:219.1px">
</div>
<div class="t b" style="left:105.29px;top:228.00px;font-size:8.50px;letter-spacing:-0.159px;color:#8a8a8a;">Addresseable</div>
<div class="t" style="left:104.76px;top:241.00px;font-size:9.70px;letter-spacing:-0.273px;color:#b0b0b0;">1,122,586</div>
<div class="t b" style="left:148.66px;top:247.00px;font-size:3.60px;letter-spacing:0.108px;color:#aaa;">IMPRESSIONS</div>
<div class="abs tab" style="top:264.9px">
</div>
<div class="t b" style="left:104.93px;top:274.00px;font-size:8.50px;letter-spacing:-0.095px;color:#8a8a8a;">Keyword Targeting</div>
<div class="t" style="left:104.76px;top:287.00px;font-size:9.70px;letter-spacing:-0.239px;color:#b0b0b0;">140,937</div>
<div class="t b" style="left:141.26px;top:293.00px;font-size:3.60px;letter-spacing:0.108px;color:#aaa;">IMPRESSIONS</div>
<div class="abs tab" style="top:310.4px">
</div>
<div class="t b" style="left:105.15px;top:320.00px;font-size:8.50px;letter-spacing:-0.130px;color:#8a8a8a;">Contextual</div>
<div class="t" style="left:105.01px;top:332.00px;font-size:9.70px;letter-spacing:-0.281px;color:#b0b0b0;">229,367</div>
<div class="t b" style="left:141.26px;top:338.00px;font-size:3.60px;letter-spacing:0.108px;color:#aaa;">IMPRESSIONS</div>
<div class="abs tab" style="top:356.2px">
</div>
<div class="t b" style="left:105.26px;top:366.00px;font-size:8.50px;letter-spacing:-0.124px;color:#8a8a8a;">Site Retargeting</div>
<div class="t" style="left:105.11px;top:378.00px;font-size:9.70px;letter-spacing:-0.298px;color:#b0b0b0;">545,637</div>
<div class="t b" style="left:141.26px;top:384.00px;font-size:3.60px;letter-spacing:0.108px;color:#aaa;">IMPRESSIONS</div>
<div class="t b" style="left:115.69px;top:409.00px;font-size:4.70px;letter-spacing:0.191px;color:#111;-webkit-text-stroke:.2px #111">DESCRIPTION</div>
<div class="t" style="left:115.73px;top:417.00px;font-size:5.30px;letter-spacing:0.055px;color:#3a3a3a;">Geo-targeting is a method of</div>
<div class="t" style="left:115.78px;top:423.00px;font-size:5.30px;letter-spacing:0.055px;color:#3a3a3a;">detecting a website visitor's</div>
<div class="t" style="left:115.64px;top:430.00px;font-size:5.30px;letter-spacing:0.055px;color:#3a3a3a;">location to serve location-</div>
<div class="t" style="left:115.66px;top:436.00px;font-size:5.30px;letter-spacing:0.055px;color:#3a3a3a;">based content or</div>
<div class="t" style="left:115.77px;top:442.00px;font-size:5.30px;letter-spacing:0.055px;color:#3a3a3a;">advertisements.</div>
<svg class="abs" style="left:224.2px;top:359.600px" width="8" height="8" viewBox="0 0 8 8" fill="none" stroke="#ee5f8f" stroke-width="0.7" stroke-linejoin="round" stroke-linecap="round"><circle cx="4" cy="2.400" r="1.600"/><path d="M1 7.300c0-1.900 1.300-3 3-3s3 1.100 3 3"/></svg>
<div class="t" style="left:210.76px;top:373.00px;font-size:4.20px;letter-spacing:0.143px;color:#777;">LOADED THE AD</div>
<div class="t b" style="left:214.35px;top:382.00px;font-size:10.40px;letter-spacing:0.219px;color:#111;">7,664</div>
<svg class="abs" style="left:282.0px;top:359.600px" width="8" height="8" viewBox="0 0 8 8" fill="none" stroke="#c44fd8" stroke-width="0.7" stroke-linejoin="round" stroke-linecap="round"><path d="M.3 4C1.300 2.300 2.600 1.500 4 1.500S6.700 2.300 7.700 4C6.700 5.700 5.400 6.500 4 6.500S1.300 5.700.3 4z"/><circle cx="4" cy="4" r="1.200"/></svg>
<div class="t" style="left:271.91px;top:373.00px;font-size:4.20px;letter-spacing:0.213px;color:#777;">SAW THE AD</div>
<div class="t b" style="left:272.46px;top:382.00px;font-size:10.40px;letter-spacing:0.257px;color:#111;">3,682</div>
<svg class="abs" style="left:339.1px;top:359.600px" width="8" height="8" viewBox="0 0 8 8" fill="none" stroke="#7a55f2" stroke-width="0.7" stroke-linejoin="round" stroke-linecap="round"><path d="M.8 3.700h1.500v3.600H.8zM2.300 3.700L4 .7c.8 0 1.100.6 1 1.200l-.3 1.400h1.900c.5 0 .9.500.8 1l-.5 2.200c-.1.500-.5.800-1 .8H2.300"/></svg>
<div class="t" style="left:329.71px;top:373.00px;font-size:4.20px;letter-spacing:0.084px;color:#777;">INTERACTED</div>
<div class="t b" style="left:334.44px;top:382.00px;font-size:10.40px;letter-spacing:0.449px;color:#111;">965</div>
<svg class="abs" style="left:397.7px;top:359.600px" width="8" height="8" viewBox="0 0 8 8" fill="none" stroke="#3f6fe8" stroke-width="0.7" stroke-linejoin="round" stroke-linecap="round"><path d="M1.400 7.600V.8M1.400 1h5.400l-1.100 2 1.100 2H1.400"/></svg>
<div class="t" style="left:389.31px;top:373.00px;font-size:4.20px;letter-spacing:0.114px;color:#777;">SIGNED UP</div>
<div class="t b" style="left:391.86px;top:382.00px;font-size:10.40px;letter-spacing:0.436px;color:#111;">329</div>
<div class="abs" style="left:443px;top:351px;width:1px;height:111px;background:#ececec"></div>
<svg class="abs" style="left:455.600px;top:360.0px" width="8" height="8" viewBox="0 0 8 8" fill="none" stroke="#2f7be0" stroke-width="0.7" stroke-linejoin="round" stroke-linecap="round"><rect x=".5" y=".5" width="7" height="7" rx="1.400" stroke-width=".85"/><circle cx="2.700" cy="2.700" r=".7" fill="#2f7be0" stroke="none"/><path d="M1 6.800L5.200 2.600M3.700 7.200L5.700 5l1.800 1.800" stroke-width=".75"/></svg>
<div class="t" style="left:478.78px;top:357.00px;font-size:16.00px;letter-spacing:0.792px;color:#111;-webkit-text-stroke:.25px #111">74</div>
<div class="t b" style="left:503.19px;top:363.00px;font-size:4.60px;letter-spacing:-0.259px;color:#1a66d8;">ADS</div>
<svg class="abs" style="left:455.600px;top:387.4px" width="8" height="8" viewBox="0 0 8 8" fill="none" stroke="#2f7be0" stroke-width="0.7" stroke-linejoin="round" stroke-linecap="round"><circle cx="4" cy="4" r="3.700" fill="#4a8fe8" stroke="#2f7be0" stroke-width=".5"/><circle cx="4" cy="4" r="1.800" stroke="#d8e6fa" stroke-width=".7"/><circle cx="4" cy="4" r=".6" fill="#d8e6fa" stroke="none"/></svg>
<div class="t" style="left:478.80px;top:384.00px;font-size:16.00px;letter-spacing:0.776px;color:#111;-webkit-text-stroke:.25px #111">24</div>
<div class="t b" style="left:503.25px;top:390.00px;font-size:4.60px;letter-spacing:-0.184px;color:#1a66d8;">TARGETS</div>
<svg class="abs" style="left:455.600px;top:414.8px" width="8" height="8" viewBox="0 0 8 8" fill="none" stroke="#2f7be0" stroke-width="0.7" stroke-linejoin="round" stroke-linecap="round"><path d="M7.400 3.500A3.500 3.500 0 1 1 5.300 .8" stroke-width=".85"/><path d="M2.600 3.700l1.400 1.400L7.500 1.600" stroke-width=".85"/></svg>
<div class="t" style="left:478.80px;top:411.00px;font-size:16.00px;letter-spacing:0.933px;color:#111;-webkit-text-stroke:.25px #111">20</div>
<div class="t b" style="left:503.11px;top:417.00px;font-size:4.60px;letter-spacing:-0.088px;color:#1a66d8;">CAMPAIGNS</div>
<svg class="abs" style="left:455.600px;top:441.6px" width="8" height="8" viewBox="0 0 8 8" fill="none" stroke="#2f7be0" stroke-width="0.7" stroke-linejoin="round" stroke-linecap="round"><circle cx="4" cy="4" r="1.600" stroke-width=".8"/><path d="M4 0v1.300M4 6.700v1.300M0 4h1.300M6.700 4h1.300M1.200 1.200l.9.900M5.900 5.900l.9.900M6.800 1.200l-.9.900M2.100 5.900l-.9.900" stroke-width=".7"/></svg>
<div class="t" style="left:471.00px;top:443.00px;font-size:10.20px;letter-spacing:1.023px;color:#111;-webkit-text-stroke:.2px #111">0.</div>
<div class="t" style="left:478.99px;top:438.00px;font-size:16.00px;letter-spacing:0.581px;color:#111;-webkit-text-stroke:.25px #111">34</div>
<div class="t b" style="left:503.19px;top:444.00px;font-size:4.60px;letter-spacing:-0.203px;color:#1a66d8;">% CTR</div>
<div class="abs" style="left:548.800px;top:352px;width:90px;height:130.200px;background:#0c66d8;border-radius:1.500px;box-shadow:0 3px 8px rgba(0,0,0,.2)"></div>
<div class="t b" style="left:557.15px;top:359.00px;font-size:4.20px;letter-spacing:0.266px;color:#fff;">TOP</div>
<div class="t b" style="left:599.88px;top:359.00px;font-size:4.20px;letter-spacing:0.137px;color:#fff;">SITES</div>
<div class="t b" style="left:618.60px;top:359.00px;font-size:4.20px;letter-spacing:0.110px;color:rgba(255,255,255,.33);">APPS</div>
<div class="abs" style="left:552.600px;top:367.100px;width:82.400px;height:.6px;background:rgba(255,255,255,.2)"></div>
<div class="abs" style="left:597.100px;top:366.800px;width:18.700px;height:1px;background:#fff"></div>
<div class="t" style="left:561.61px;top:377.00px;font-size:4.90px;letter-spacing:0.000px;color:rgba(255,255,255,.42);">1</div>
<div class="t b" style="left:571.51px;top:376.00px;font-size:5.80px;letter-spacing:-0.442px;color:#fff;">Facebook.com</div>
<div class="t" style="left:561.62px;top:387.00px;font-size:4.90px;letter-spacing:0.000px;color:rgba(255,255,255,.42);">2</div>
<div class="t b" style="left:571.83px;top:386.00px;font-size:5.80px;letter-spacing:-0.442px;color:#fff;">Twitter.com</div>
<div class="t" style="left:561.59px;top:397.00px;font-size:4.90px;letter-spacing:0.000px;color:rgba(255,255,255,.42);">3</div>
<div class="t b" style="left:571.66px;top:396.00px;font-size:5.80px;letter-spacing:-0.442px;color:#fff;">Google.com</div>
<div class="t" style="left:561.52px;top:407.00px;font-size:4.90px;letter-spacing:0.000px;color:rgba(255,255,255,.42);">4</div>
<div class="t b" style="left:571.80px;top:406.00px;font-size:5.80px;letter-spacing:-0.442px;color:#fff;">Youtube.com</div>
<div class="t" style="left:561.58px;top:417.00px;font-size:4.90px;letter-spacing:0.000px;color:rgba(255,255,255,.42);">5</div>
<div class="t b" style="left:571.51px;top:416.00px;font-size:5.80px;letter-spacing:-0.442px;color:#fff;">Instagram.com</div>
<div class="t" style="left:561.59px;top:427.00px;font-size:4.90px;letter-spacing:0.000px;color:rgba(255,255,255,.42);">6</div>
<div class="t b" style="left:571.51px;top:426.00px;font-size:5.80px;letter-spacing:-0.442px;color:#fff;">Linkedin.com</div>
<div class="t" style="left:561.62px;top:438.00px;font-size:4.90px;letter-spacing:0.000px;color:rgba(255,255,255,.42);">7</div>
<div class="t b" style="left:571.89px;top:437.00px;font-size:5.80px;letter-spacing:-0.442px;color:#fff;">Wordpress.org</div>
<div class="t" style="left:561.59px;top:448.00px;font-size:4.90px;letter-spacing:0.000px;color:rgba(255,255,255,.42);">8</div>
<div class="t b" style="left:571.51px;top:447.00px;font-size:5.80px;letter-spacing:-0.442px;color:#fff;">Pinterest.com</div>
<div class="t" style="left:561.61px;top:458.00px;font-size:4.90px;letter-spacing:0.000px;color:rgba(255,255,255,.42);">9</div>
<div class="t b" style="left:571.89px;top:457.00px;font-size:5.80px;letter-spacing:-0.442px;color:#fff;">Wikipedia.org</div>
<div class="t" style="left:558.84px;top:468.00px;font-size:4.90px;letter-spacing:0.000px;color:rgba(255,255,255,.42);">10</div>
<div class="t b" style="left:571.89px;top:467.00px;font-size:5.80px;letter-spacing:-0.442px;color:#fff;">Wordpress.com</div>
</div></body></html>
